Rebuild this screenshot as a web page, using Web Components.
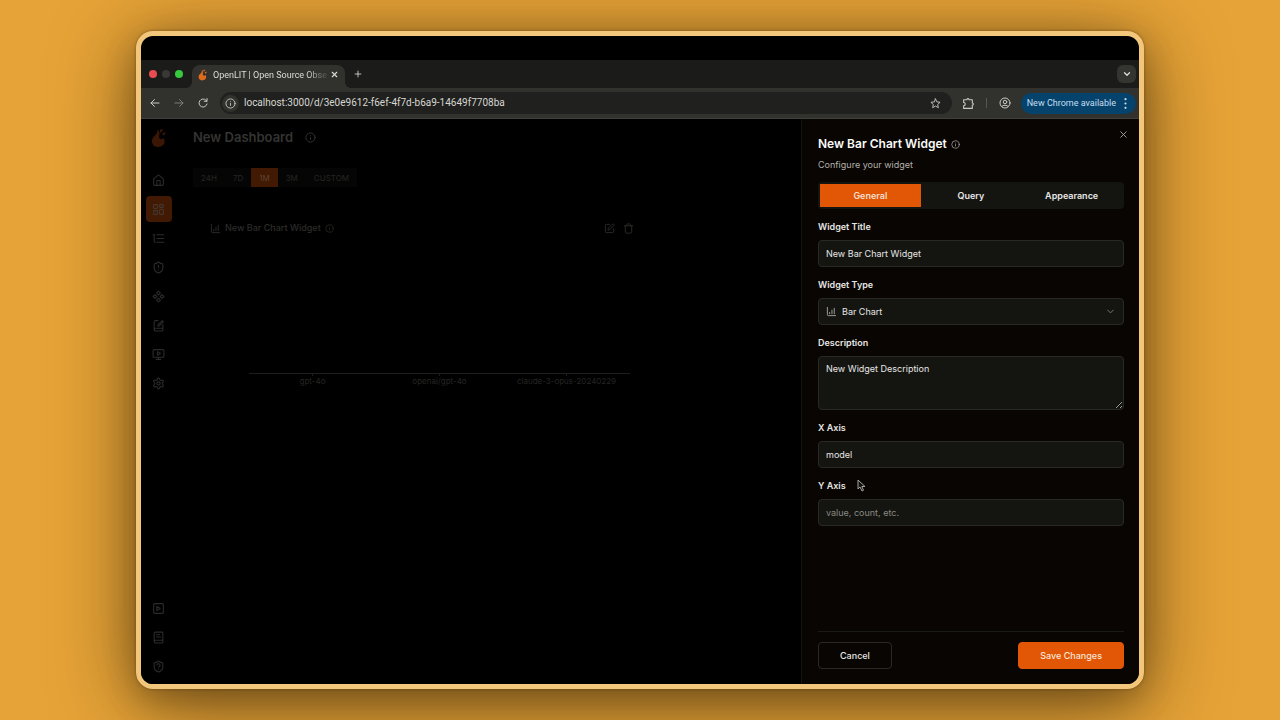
<!DOCTYPE html>
<html lang="en">
<head>
<meta charset="utf-8">
<title>OpenLIT | Open Source Observability</title>
<style>
  body {
    margin: 0;
    min-height: 100vh;
    display: flex;
    box-sizing: border-box;
    padding: 31px 136px;
    background: #e6a337;
    font-family: Inter, "Liberation Sans", sans-serif;
    font-size: 9px;
    color: #e7e5e4;
  }
  browser-window { flex: 1; }
</style>
</head>
<body>
<browser-window></browser-window>

<script>
const ICONS = {
  home: '<path d="M15 21v-8a1 1 0 0 0-1-1h-4a1 1 0 0 0-1 1v8"/><path d="M3 10a2 2 0 0 1 .709-1.528l7-5.999a2 2 0 0 1 2.582 0l7 5.999A2 2 0 0 1 21 10v9a2 2 0 0 1-2 2H5a2 2 0 0 1-2-2z"/>',
  grid: '<rect x="3" y="3" width="7" height="7" rx="1"/><rect x="14" y="3" width="7" height="5" rx="1"/><rect x="14" y="12" width="7" height="9" rx="1"/><rect x="3" y="14" width="7" height="7" rx="1"/>',
  trace: '<path d="M2 5h3"/><path d="M9 5h13"/><path d="M9 12h13"/><path d="M9 19h13"/><path d="M4 5v12a2 2 0 0 0 2 2"/>',
  shield: '<path d="M20 13c0 5-3.500 7.500-7.660 8.950a1 1 0 0 1-.67-.01C7.500 20.500 4 18 4 13V6a1 1 0 0 1 1-1c2 0 4.500-1.200 6.240-2.720a1.170 1.170 0 0 1 1.520 0C14.510 3.810 17 5 19 5a1 1 0 0 1 1 1z"/><path d="M12 8v4"/><path d="M12 16h.01"/>',
  component: '<path d="m12 2 3.500 3.500L12 9 8.500 5.500z"/><path d="m5.500 8.500 3.500 3.500-3.500 3.500L2 12z"/><path d="m18.500 8.500 3.500 3.500-3.500 3.500L15 12z"/><path d="m12 15 3.500 3.500L12 22l-3.500-3.500z"/>',
  notebook: '<path d="M11 3H6.500A2.500 2.500 0 0 0 4 5.500v14"/><path d="M20 10v11a1 1 0 0 1-1 1H6.500a2.500 2.500 0 0 1 0-5H20"/><path d="m11 11 8-8 2 2-8 8h-2z"/>',
  monitor: '<path d="M10 7.750a.75.75 0 0 1 1.142-.638l3.664 2.249a.75.75 0 0 1 0 1.278l-3.664 2.250a.75.75 0 0 1-1.142-.64z"/><path d="M12 17v4"/><path d="M8 21h8"/><rect x="2" y="3" width="20" height="14" rx="2"/>',
  gear: '<path d="M12.220 2h-.44a2 2 0 0 0-2 2v.18a2 2 0 0 1-1 1.730l-.43.25a2 2 0 0 1-2 0l-.15-.08a2 2 0 0 0-2.730.73l-.22.38a2 2 0 0 0 .73 2.730l.15.1a2 2 0 0 1 1 1.720v.51a2 2 0 0 1-1 1.740l-.15.09a2 2 0 0 0-.73 2.730l.22.38a2 2 0 0 0 2.730.73l.15-.08a2 2 0 0 1 2 0l.43.25a2 2 0 0 1 1 1.730V20a2 2 0 0 0 2 2h.44a2 2 0 0 0 2-2v-.18a2 2 0 0 1 1-1.730l.43-.25a2 2 0 0 1 2 0l.15.08a2 2 0 0 0 2.730-.73l.22-.39a2 2 0 0 0-.73-2.730l-.15-.08a2 2 0 0 1-1-1.740v-.5a2 2 0 0 1 1-1.740l.15-.09a2 2 0 0 0 .73-2.730l-.22-.38a2 2 0 0 0-2.730-.73l-.15.08a2 2 0 0 1-2 0l-.43-.25a2 2 0 0 1-1-1.730V4a2 2 0 0 0-2-2z"/><circle cx="12" cy="12" r="3"/>',
  play: '<rect x="3" y="3" width="18" height="18" rx="2"/><path d="m9 8 6 4-6 4z"/>',
  book: '<path d="M4 19.500v-15A2.500 2.500 0 0 1 6.500 2H19a1 1 0 0 1 1 1v18a1 1 0 0 1-1 1H6.500a1 1 0 0 1 0-5H20"/><path d="M8 11h8"/><path d="M8 7h6"/>',
  help: '<path d="M20 13c0 5-3.500 7.500-7.660 8.950a1 1 0 0 1-.67-.01C7.500 20.500 4 18 4 13V6a1 1 0 0 1 1-1c2 0 4.500-1.200 6.240-2.720a1.170 1.170 0 0 1 1.520 0C14.510 3.810 17 5 19 5a1 1 0 0 1 1 1z"/><path d="M9.100 9a3 3 0 0 1 5.820 1c0 2-3 3-3 3"/><path d="M12 17h.01"/>',
  info: '<circle cx="12" cy="12" r="10"/><path d="M12 16v-4"/><path d="M12 8h.01"/>',
  chart: '<path d="M3 3v16a2 2 0 0 0 2 2h16"/><path d="M8 17v-3"/><path d="M13 17V9"/><path d="M18 17V5"/>',
  edit: '<path d="M12 3H5a2 2 0 0 0-2 2v14a2 2 0 0 0 2 2h14a2 2 0 0 0 2-2v-7"/><path d="M18.400 2.600a1 1 0 0 1 3 3l-9 9-4 1 1-4z"/>',
  trash: '<path d="M3 6h18"/><path d="M19 6v14a2 2 0 0 1-2 2H7a2 2 0 0 1-2-2V6"/><path d="M8 6V4a2 2 0 0 1 2-2h4a2 2 0 0 1 2 2v2"/>',
  close: '<path d="M18 6 6 18"/><path d="m6 6 12 12"/>',
  plus: '<path d="M5 12h14"/><path d="M12 5v14"/>',
  down: '<path d="m6 9 6 6 6-6"/>',
  back: '<path d="m11 19-7-7 7-7"/><path d="M20 12H4"/>',
  forward: '<path d="m13 19 7-7-7-7"/><path d="M4 12h16"/>',
  reload: '<path d="M20 14a8 8 0 1 1-2.300-7.700L20 8.500"/><path d="M20 3v5.500h-5.500"/>',
  star: '<path d="m12 2 3 6.500 7 .8-5.200 4.800 1.400 7-6.200-3.500-6.200 3.500 1.400-7L2 9.300l7-.8z"/>',
  puzzle: '<path d="M3 5h6a2 2 0 0 1 4 0h6v6a2 2 0 0 1 0 4v6H3v-5a3 3 0 0 0 0-6z"/>',
  user: '<circle cx="12" cy="12" r="10"/><circle cx="12" cy="10" r="3.500"/><path d="M5.500 19c2-3.500 11-3.500 13 0"/>',
  dots: '<circle cx="12" cy="4" r="1"/><circle cx="12" cy="12" r="1"/><circle cx="12" cy="20" r="1"/>'
};

class UiIcon extends HTMLElement {
  connectedCallback() {
    const size = this.getAttribute('size') || 12;
    const weight = this.getAttribute('weight') || 2;
    this.attachShadow({ mode: 'open' }).innerHTML = `
      <style>
        :host { display: block; flex: none; }
        svg { display: block; fill: none; stroke: currentColor; stroke-linecap: round; stroke-linejoin: round; }
      </style>
      <svg width="${size}" height="${size}" viewBox="0 0 24 24" stroke-width="${weight}" aria-hidden="true">${ICONS[this.getAttribute('name')]}</svg>
    `;
  }
}

class FlameLogo extends HTMLElement {
  connectedCallback() {
    this.attachShadow({ mode: 'open' }).innerHTML = `
      <style>
        :host { display: block; flex: none; width: 9px; height: 12px; color: #e06a1c; }
        svg { display: block; width: 100%; height: 100%; }
      </style>
      <svg viewBox="0 0 20 26" aria-hidden="true">
        <path fill="currentColor" d="M8 2c2 4-1 6-4 9-5 5-3 14 5 14s11-6 8-12c-2 2-5 2-6 0s1-5 0-8c-.5-2-2-3-3-3z"/>
        <path fill="currentColor" d="m12 2 4-1-1 3-3 2zM15 7l4-2v3l-3 2z"/>
      </svg>
    `;
  }
}

class BrowserWindow extends HTMLElement {
  connectedCallback() {
    this.attachShadow({ mode: 'open' }).innerHTML = `
      <style>
        :host {
          display: flex;
          flex-direction: column;
          box-sizing: border-box;
          border: 5px solid #f2c77c;
          border-radius: 17px;
          overflow: hidden;
          background: #000;
          box-shadow: 0 0 3px rgba(70,40,0,.5), 0 10px 30px rgba(45,30,8,.25), 0 14px 80px rgba(45,30,8,.65);
        }
        .menubar { height: 24px; }
        .page { flex: 1; display: grid; grid-template-columns: 1fr 338px; }
      </style>
      <div class="menubar"></div>
      <tab-strip></tab-strip>
      <tool-bar></tool-bar>
      <div class="page">
        <dashboard-page></dashboard-page>
        <widget-sheet></widget-sheet>
      </div>
    `;
  }
}

class TabStrip extends HTMLElement {
  connectedCallback() {
    this.attachShadow({ mode: 'open' }).innerHTML = `
      <style>
        :host { display: flex; align-items: flex-end; height: 28px; background: #1b1c19; color: #dcdcd8; }
        button { border: 0; padding: 0; background: none; color: inherit; }
        .lights { display: flex; gap: 5px; align-self: center; padding: 0 9px 0 8px; }
        .lights i { width: 8px; height: 8px; border-radius: 50%; background: #383935; }
        .lights .red { background: #e84c50; }
        .lights .green { background: #36c940; }
        .tab {
          display: flex; align-items: center; box-sizing: border-box; position: relative;
          width: 153px; height: 23px; margin: 0 8px 0 0; padding: 0 6px 4px 6px;
          border-radius: 8px 8px 0 0; background: #31322e;
        }
        /* flared feet of the active tab */
        .tab::before, .tab::after { content: ""; position: absolute; bottom: 0; width: 6px; height: 6px; }
        .tab::before { right: 100%; background: radial-gradient(circle at 0 0, transparent 6px, #31322e 6px); }
        .tab::after { left: 100%; background: radial-gradient(circle at 100% 0, transparent 6px, #31322e 6px); }
        .tab span {
          flex: 1; margin-left: 6px; white-space: nowrap; font: 9px/14px Roboto, sans-serif;
          -webkit-mask-image: linear-gradient(90deg, #000 80%, transparent 100%);
          mask-image: linear-gradient(90deg, #000 80%, transparent 100%);
        }
        .add { margin-bottom: 9px; }
        .menu {
          display: grid; place-items: center; width: 19px; height: 18px;
          margin: 0 3px 5px auto; border-radius: 6px; background: #343531;
        }
      </style>
      <div class="lights"><i class="red"></i><i></i><i class="green"></i></div>
      <div class="tab">
        <flame-logo></flame-logo>
        <span>OpenLIT | Open Source Obse</span>
        <button aria-label="Close tab"><ui-icon name="close" size="9" weight="3"></ui-icon></button>
      </div>
      <button class="add" aria-label="New tab"><ui-icon name="plus" size="10"></ui-icon></button>
      <button class="menu" aria-label="Search tabs"><ui-icon name="down" size="10" weight="3"></ui-icon></button>
    `;
  }
}

class ToolBar extends HTMLElement {
  connectedCallback() {
    this.attachShadow({ mode: 'open' }).innerHTML = `
      <style>
        :host {
          display: flex; align-items: center; box-sizing: border-box; height: 31px;
          padding: 0 3px 0 8px; background: #31322e; border-bottom: 1px solid #40413d; color: #c9c9c5;
        }
        button { border: 0; padding: 0; background: none; color: inherit; font: inherit; }
        .nav { display: flex; gap: 12px; }
        .nav button:nth-child(2) { color: #7c7d78; }
        .address {
          flex: 1; display: flex; align-items: center; gap: 5px; box-sizing: border-box; height: 22px;
          margin: 0 10px 0 11px; padding: 0 11px 0 2px; border-radius: 11px; background: #20211e;
        }
        .site { display: grid; place-items: center; width: 17px; height: 17px; border-radius: 50%; background: #31322e; }
        input { flex: 1; min-width: 0; border: 0; padding: 0; background: none; color: #d6d6d2; font: 10px/14px Roboto, sans-serif; outline: 0; }
        .rule { width: 1px; height: 10px; margin: 0 12px 0 11px; background: #555651; }
        .update {
          display: flex; align-items: center; gap: 3px; height: 21px; margin-left: 10px; padding: 0 4px 0 6px;
          border-radius: 11px; background: #05426c; color: #c5dff2; font: 9px/14px Roboto, sans-serif;
        }
      </style>
      <div class="nav">
        <button aria-label="Back"><ui-icon name="back"></ui-icon></button>
        <button aria-label="Forward"><ui-icon name="forward"></ui-icon></button>
        <button aria-label="Reload"><ui-icon name="reload"></ui-icon></button>
      </div>
      <div class="address">
        <button class="site" aria-label="Site information"><ui-icon name="info" size="11"></ui-icon></button>
        <input aria-label="Address" value="localhost:3000/d/3e0e9612-f6ef-4f7d-b6a9-14649f7708ba">
        <button aria-label="Bookmark"><ui-icon name="star" size="11"></ui-icon></button>
      </div>
      <button aria-label="Extensions"><ui-icon name="puzzle" size="13"></ui-icon></button>
      <div class="rule"></div>
      <button aria-label="Profile"><ui-icon name="user"></ui-icon></button>
      <button class="update">New Chrome available <ui-icon name="dots" size="13"></ui-icon></button>
    `;
  }
}

class SideNav extends HTMLElement {
  connectedCallback() {
    const link = ([icon, label]) => `<a href="#${icon}" aria-label="${label}"${icon === 'grid' ? ' class="active"' : ''}><ui-icon name="${icon}" size="13"></ui-icon></a>`;
    const top = [['home', 'Home'], ['grid', 'Dashboards'], ['trace', 'Requests'], ['shield', 'Exceptions'],
      ['component', 'Prompt hub'], ['notebook', 'Vault'], ['monitor', 'Openground'], ['gear', 'Settings']];
    const bottom = [['play', 'Getting started'], ['book', 'Documentation'], ['help', 'Support']];
    this.attachShadow({ mode: 'open' }).innerHTML = `
      <style>
        :host { display: flex; flex-direction: column; align-items: center; gap: 3px; box-sizing: border-box; width: 35px; padding: 9px 0 5px; color: #2b2b29; }
        flame-logo { width: 15px; height: 20px; margin-bottom: 16px; color: #3c1605; }
        a { display: grid; place-items: center; width: 26px; height: 26px; border-radius: 4px; color: inherit; }
        .active { background: #421903; color: #42372e; }
        .space { flex: 1; }
      </style>
      <flame-logo></flame-logo>
      ${top.map(link).join('')}
      <div class="space"></div>
      ${bottom.map(link).join('')}
    `;
  }
}

class DashboardPage extends HTMLElement {
  connectedCallback() {
    const ranges = ['24H', '7D', '1M', '3M', 'CUSTOM'];
    const models = ['gpt-4o', 'openai/gpt-4o', 'claude-3-opus-20240229'];
    this.attachShadow({ mode: 'open' }).innerHTML = `
      <style>
        :host { display: flex; background: #000; color: #343432; }
        main { flex: 1; padding: 9px 16px 0 17px; }
        header { display: flex; align-items: center; gap: 12px; }
        h1 { margin: 0; font-size: 13px; line-height: 18px; font-weight: 600; }
        button { border: 0; padding: 0; background: none; color: inherit; font: inherit; }
        .ranges { display: flex; width: max-content; margin-top: 22px; background: #050505; color: #252523; }
        .ranges button { height: 19px; padding: 0 8px; font-size: 8px; line-height: 12px; }
        .ranges .on { background: #421903; color: #5d4433; }
        section { width: 442px; margin-top: 34px; }
        .head { display: flex; align-items: center; gap: 4px; padding: 0 1px 0 17px; color: #2c2c2a; }
        h2 { margin: 0; font-size: 9px; line-height: 14px; font-weight: 500; }
        .head .first { margin-left: auto; margin-right: 4px; }
        .axis {
          display: grid; grid-template-columns: repeat(3, 1fr); margin: 138px 5px 0 56px;
          border-top: 1px solid #1e1e1c; color: #262624; font-size: 8px; line-height: 10px; text-align: center;
        }
        .axis span { white-space: nowrap; }
        .axis span::before { content: ""; display: block; width: 1px; height: 2px; margin: 0 auto; background: #1e1e1c; }
      </style>
      <side-nav></side-nav>
      <main>
        <header><h1>New Dashboard</h1><ui-icon name="info" size="11"></ui-icon></header>
        <div class="ranges">${ranges.map(r => `<button${r === '1M' ? ' class="on"' : ''}>${r}</button>`).join('')}</div>
        <section>
          <div class="head">
            <ui-icon name="chart" size="11"></ui-icon>
            <h2>New Bar Chart Widget</h2>
            <ui-icon name="info" size="9"></ui-icon>
            <button class="first" aria-label="Edit widget"><ui-icon name="edit" size="11"></ui-icon></button>
            <button aria-label="Delete widget"><ui-icon name="trash" size="11"></ui-icon></button>
          </div>
          <div class="axis">${models.map(m => `<span>${m}</span>`).join('')}</div>
        </section>
      </main>
    `;
  }
}

class WidgetSheet extends HTMLElement {
  connectedCallback() {
    this.attachShadow({ mode: 'open' }).innerHTML = `
      <style>
        :host {
          display: flex; flex-direction: column; position: relative; box-sizing: border-box;
          padding: 16px 15px 15px 16px; border-left: 1px solid #141512; background: #080502;
        }
        button, input, select, textarea { font: 9px/14px Inter, sans-serif; color: #e7e5e4; }
        .title { display: flex; align-items: center; gap: 4px; color: #a8a5a0; }
        h2 { margin: 0; font-size: 12px; line-height: 18px; font-weight: 600; color: #fafaf9; }
        p { margin: 5px 0 10px; line-height: 14px; color: #b3b0ab; }
        .close { position: absolute; top: 10px; right: 10px; border: 0; padding: 0; background: none; color: #a8a5a0; }
        .tabs { display: grid; grid-template-columns: repeat(3, 1fr); box-sizing: border-box; height: 27px; padding: 2px; border-radius: 4px; background: #141511; }
        .tabs button { border: 0; padding: 0; background: none; font-weight: 600; }
        .tabs .on { background: #e25706; color: #f5ddcc; }
        form { display: flex; flex-direction: column; gap: 11px; margin-top: 11px; }
        .field { display: flex; flex-direction: column; gap: 6px; }
        label { line-height: 14px; font-weight: 600; }
        .control {
          box-sizing: border-box; width: 100%; height: 27px; margin: 0; padding: 0 7px;
          border: 1px solid #292a26; border-radius: 4px; background: #141511; outline: 0;
        }
        textarea.control { display: block; height: 54px; padding: 5px 7px; }
        ::placeholder { color: #8a8883; }
        .select { display: grid; align-items: center; color: #a8a5a0; }
        .select > * { grid-area: 1 / 1; }
        .select select { appearance: none; padding-left: 23px; }
        .select ui-icon { z-index: 1; margin: 0 8px; pointer-events: none; }
        .select .arrow { justify-self: end; color: #7f7d78; }
        .cursor { position: absolute; left: 55px; top: 360px; }
        footer { display: flex; justify-content: space-between; margin-top: auto; padding-top: 10px; border-top: 1px solid #191a16; }
        footer button { height: 27px; padding: 0 21px; border: 1px solid #292a26; border-radius: 4px; background: none; font-weight: 500; }
        footer .save { border-color: #e25706; background: #e25706; color: #f8e4d6; }
      </style>
      <div class="title"><h2>New Bar Chart Widget</h2><ui-icon name="info" size="9"></ui-icon></div>
      <p>Configure your widget</p>
      <button class="close" aria-label="Close"><ui-icon name="close" size="11"></ui-icon></button>
      <div class="tabs" role="tablist">
        <button class="on" role="tab" aria-selected="true">General</button>
        <button role="tab">Query</button>
        <button role="tab">Appearance</button>
      </div>
      <form>
        <div class="field">
          <label for="title">Widget Title</label>
          <input class="control" id="title" value="New Bar Chart Widget">
        </div>
        <div class="field">
          <label for="type">Widget Type</label>
          <div class="select">
            <select class="control" id="type"><option>Bar Chart</option></select>
            <ui-icon name="chart" size="11"></ui-icon>
            <ui-icon class="arrow" name="down" size="11"></ui-icon>
          </div>
        </div>
        <div class="field">
          <label for="description">Description</label>
          <textarea class="control" id="description">New Widget Description</textarea>
        </div>
        <div class="field">
          <label for="x">X Axis</label>
          <input class="control" id="x" value="model">
        </div>
        <div class="field">
          <label for="y">Y Axis</label>
          <input class="control" id="y" placeholder="value, count, etc.">
        </div>
      </form>
      <footer>
        <button>Cancel</button>
        <button class="save">Save Changes</button>
      </footer>
      <svg class="cursor" width="9" height="13" viewBox="0 0 9 13" aria-hidden="true">
        <path d="M1 1v9l2-2 2 4 1.500-.7L4.800 7.500H8z" fill="#111" stroke="#a4a3a0" stroke-width="1"/>
      </svg>
    `;
  }
}

customElements.define('ui-icon', UiIcon);
customElements.define('flame-logo', FlameLogo);
customElements.define('tab-strip', TabStrip);
customElements.define('tool-bar', ToolBar);
customElements.define('side-nav', SideNav);
customElements.define('dashboard-page', DashboardPage);
customElements.define('widget-sheet', WidgetSheet);
customElements.define('browser-window', BrowserWindow);
</script>
</body>
</html>
